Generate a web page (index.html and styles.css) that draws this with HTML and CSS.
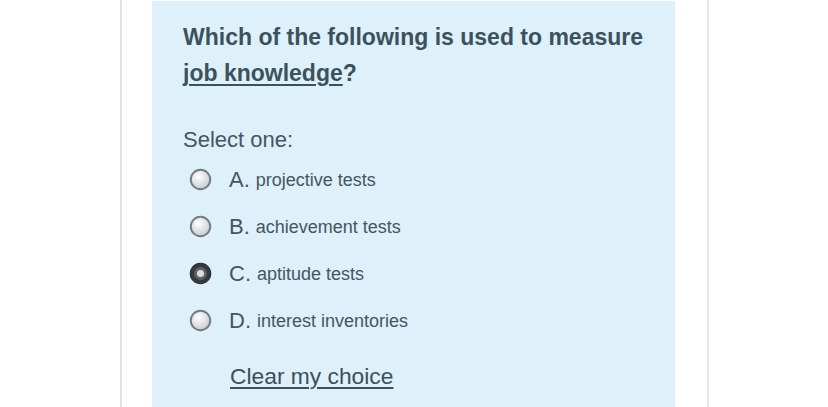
FILE: index.html
```html
<!DOCTYPE html>
<html>
<head>
<meta charset="utf-8">
<link rel="stylesheet" href="styles.css">
</head>
<body>
<div class="page">
  <div class="gutter"></div>
  <div class="main">
    <div class="panel">
      <p class="question">Which of the following is used to measure <span class="term">job knowledge</span>?</p>
      <p class="prompt">Select one:</p>
      <ul class="options">
        <li class="option">
          <svg class="radio" viewBox="0 0 22 22"><defs><radialGradient id="g1" cx="40%" cy="35%" r="65%"><stop offset="0" stop-color="#ffffff"/><stop offset="1" stop-color="#c9ced2"/></radialGradient></defs><circle cx="11" cy="11" r="9.3" fill="url(#g1)" stroke="#767c82" stroke-width="1.9"/></svg>
          <span class="letter">A.</span><span class="answer">projective tests</span>
        </li>
        <li class="option">
          <svg class="radio" viewBox="0 0 22 22"><circle cx="11" cy="11" r="9.3" fill="url(#g1)" stroke="#767c82" stroke-width="1.9"/></svg>
          <span class="letter">B.</span><span class="answer">achievement tests</span>
        </li>
        <li class="option">
          <svg class="radio" viewBox="0 0 22 22"><circle cx="11" cy="11" r="9.8" fill="#36393c" stroke="#2a2c2e" stroke-width="1"/><circle cx="11" cy="11" r="6.2" fill="#5d6165"/><circle cx="11" cy="11" r="3.4" fill="#d9dcdf"/></svg>
          <span class="letter">C.</span><span class="answer">aptitude tests</span>
        </li>
        <li class="option">
          <svg class="radio" viewBox="0 0 22 22"><circle cx="11" cy="11" r="9.3" fill="url(#g1)" stroke="#767c82" stroke-width="1.9"/></svg>
          <span class="letter">D.</span><span class="answer">interest inventories</span>
        </li>
      </ul>
      <a class="clear" href="#">Clear my choice</a>
    </div>
  </div>
</div>
</body>
</html>
```
FILE: styles.css
```css
html, body {
  margin: 0;
  padding: 0;
  background: #ffffff;
}
body {
  font-family: "Liberation Sans", Arial, sans-serif;
  color: #3b4d58;
}
.page {
  display: flex;
  height: 407px;
  overflow: hidden;
}
.gutter {
  width: 120px;
  flex: none;
}
.main {
  flex: none;
  width: 523px;
  border-left: 2px solid #e2e2e2;
  border-right: 2px solid #e6e6e6;
  padding: 1px 32px 0 30px;
  display: flex;
}
.panel {
  flex: 1;
  background: #def0f9;
  padding: 18px 0 0 31px;
}
.question {
  margin: 0;
  font-size: 23px;
  font-weight: bold;
  line-height: 36px;
  color: #3a525e;
  width: 470px;
}
.term {
  text-decoration: underline;
  text-underline-offset: 3px;
  text-decoration-thickness: 1.5px;
}
.prompt {
  margin: 35px 0 0 0;
  font-size: 22px;
  line-height: 28px;
  color: #45565f;
}
.options {
  list-style: none;
  margin: 2px 0 0 0;
  padding: 0;
}
.option {
  height: 47px;
  display: flex;
  align-items: center;
  padding-left: 6px;
}
.radio {
  width: 23px;
  height: 23px;
  flex: none;
  margin-right: 17px;
}
.letter {
  font-size: 22px;
  color: #45565f;
  margin-right: 6px;
}
.answer {
  font-size: 18px;
  color: #45565f;
  position: relative;
  top: 1px;
}
.clear {
  display: inline-block;
  margin: 18px 0 0 47px;
  font-size: 22.8px;
  line-height: 28px;
  color: #3d4f5a;
  text-decoration: underline;
  text-underline-offset: 3px;
  text-decoration-thickness: 1.5px;
}
```
